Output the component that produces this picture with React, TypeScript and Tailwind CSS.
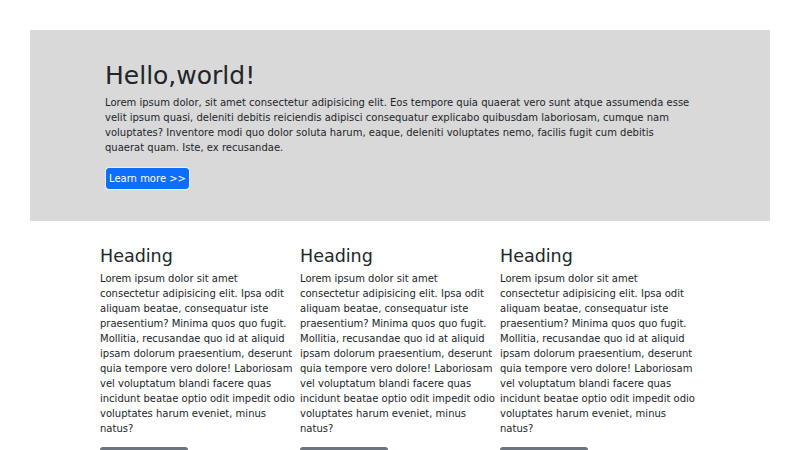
const COLUMN_TEXT =
  "Lorem ipsum dolor sit amet consectetur adipisicing elit. Ipsa odit aliquam beatae, consequatur iste praesentium? Minima quos quo fugit. Mollitia, recusandae quo id at aliquid ipsam dolorum praesentium, deserunt quia tempore vero dolore! Laboriosam vel voluptatum blandi facere quas incidunt beatae optio odit impedit odio voluptates harum eveniet, minus natus?";

export default function App() {
  return (
    <div
      className="w-[800px] h-[450px] overflow-hidden bg-white text-[#212529]"
      style={{ fontFamily: '"DejaVu Sans", Verdana, sans-serif' }}
    >
      <div className="pt-[30px] px-[30px]">
        {/* ── Jumbotron ── */}
        <div className="bg-[#d9d9d9] px-[75px] pt-[31px] pb-[32px]">
          <h1 className="text-[25px] leading-[30px] font-normal mb-[4px]">Hello,world!</h1>
          <p className="text-[10px] leading-[15px] mb-[10px]">
            Lorem ipsum dolor, sit amet consectetur adipisicing elit. Eos tempore quia quaerat vero sunt atque
            assumenda esse velit ipsum quasi, deleniti debitis reiciendis adipisci consequatur explicabo quibusdam
            laboriosam, cumque nam voluptates? Inventore modi quo dolor soluta harum, eaque, deleniti voluptates
            nemo, facilis fugit cum debitis quaerat quam. Iste, ex recusandae.
          </p>
          <button className="h-[21px] ml-[1px] px-[2px] rounded-[3px] bg-[#0d6efd] border border-[#0d6efd] text-white text-[10px] leading-[15px] ring-1 ring-[#e8eefc]">
            Learn more &gt;&gt;
          </button>
        </div>
      </div>

      {/* ── Columns ── */}
      <div className="grid grid-cols-[200px_200px_200px] pl-[100px] pt-[25px]">
        {[0, 1, 2].map(i => (
          <div key={i} className="pr-[5px]">
            <h3 className="text-[17.5px] leading-[21px] font-normal mb-[4px]">Heading</h3>
            <p className="text-[10px] leading-[15px] mb-[11px]">{COLUMN_TEXT}</p>
            <div className="w-[88px] h-[22px] rounded-[3px] bg-[#6c757d]" />
          </div>
        ))}
      </div>
    </div>
  );
}
